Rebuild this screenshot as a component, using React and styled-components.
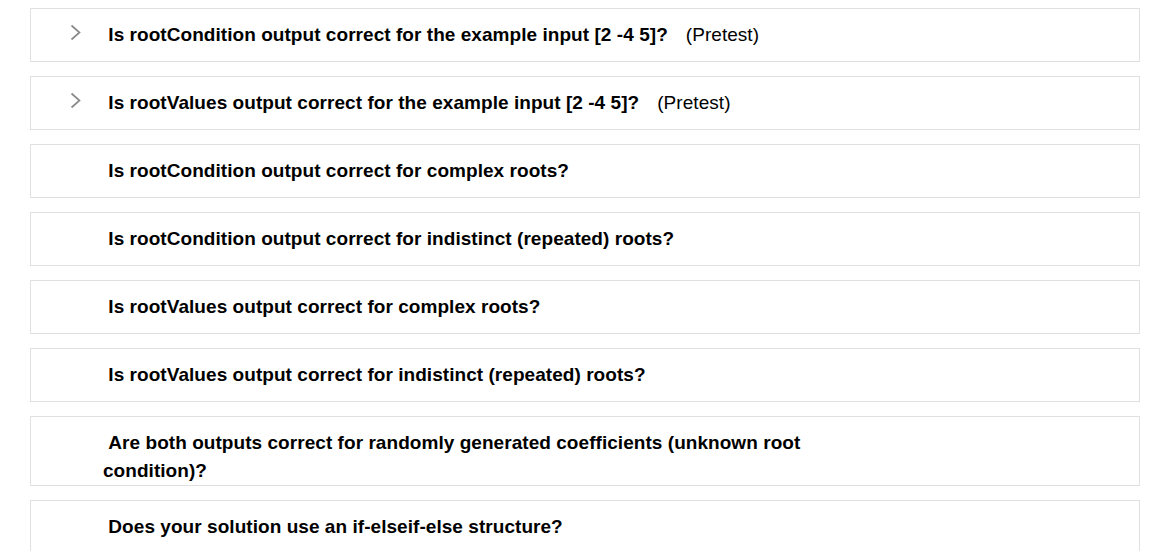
import React from "react";
import styled, { createGlobalStyle } from "styled-components";

const Global = createGlobalStyle`
  html, body { margin: 0; padding: 0; background: #fff; }
  body { font-family: "Liberation Sans", Arial, sans-serif; color: #000; }
`;

const List = styled.div`
  display: flex;
  flex-direction: column;
  gap: 14px;
  padding: 8px 15px 0 30px;
`;

const Card = styled.div`
  display: flex;
  align-items: flex-start;
  min-height: 54px;
  box-sizing: border-box;
  border: 1px solid #e0e0e0;
  background: #fff;
  padding-top: 12px;
`;

const Toggle = styled.div`
  width: 72px;
  flex: 0 0 72px;
  height: 28px;
  position: relative;
`;

const Chevron = styled.svg`
  position: absolute;
  left: 39px;
  top: 3px;
  width: 12px;
  height: 18px;
`;

const Title = styled.div`
  font-size: 19px;
  font-weight: bold;
  line-height: 28px;
  letter-spacing: 0.05px;
  max-width: 750px;
  white-space: pre-wrap;
`;

const Tag = styled.span`
  font-weight: normal;
  margin-left: 18px;
`;

const items = [
  { text: "Is rootCondition output correct for the example input [2 -4 5]?", pretest: true },
  { text: "Is rootValues output correct for the example input [2 -4 5]?", pretest: true },
  { text: "Is rootCondition output correct for complex roots?" },
  { text: "Is rootCondition output correct for indistinct (repeated) roots?" },
  { text: "Is rootValues output correct for complex roots?" },
  { text: "Is rootValues output correct for indistinct (repeated) roots?" },
  { text: "Are both outputs correct for randomly generated coefficients (unknown root condition)?" },
  { text: "Does your solution use an if-elseif-else structure?" },
];

export default function App() {
  return (
    <>
      <Global />
      <List>
        {items.map((it, i) => (
          <Card key={i}>
            <Toggle>
              {it.pretest && (
                <Chevron viewBox="0 0 12 18">
                  <polyline points="1.5,1.5 9.5,8.5 1.5,15.5" fill="none" stroke="#8a8a8a" strokeWidth="1.7" />
                </Chevron>
              )}
            </Toggle>
            <Title>
              {" " + it.text}
              {it.pretest && <Tag>(Pretest)</Tag>}
            </Title>
          </Card>
        ))}
      </List>
    </>
  );
}
